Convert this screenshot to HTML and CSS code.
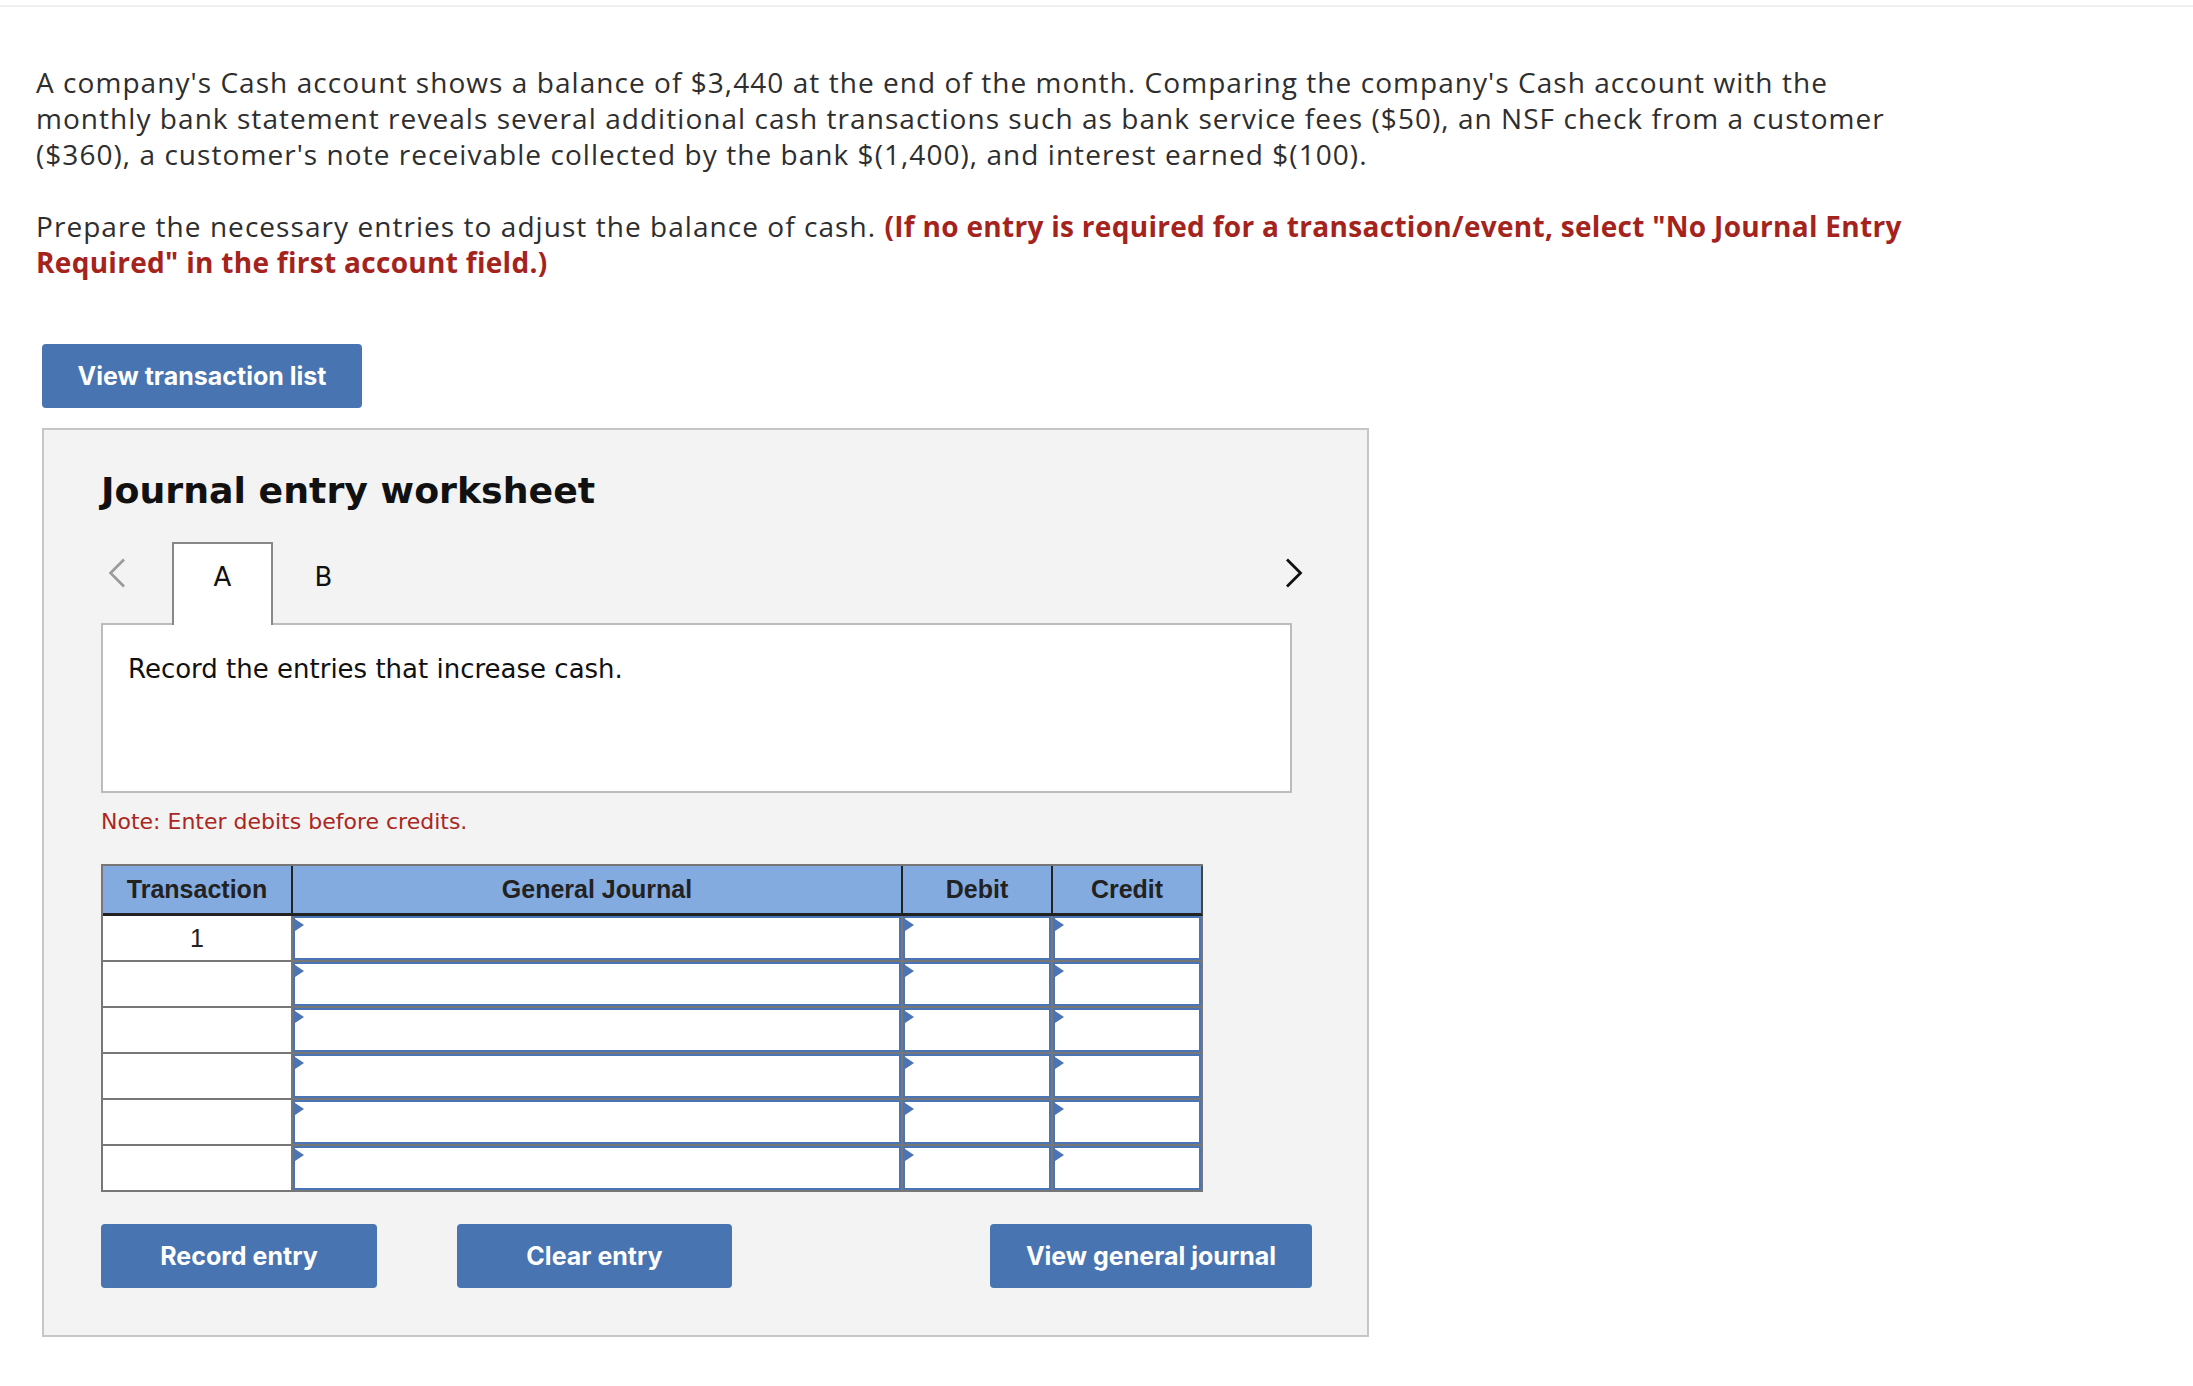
FILE: index.html
```html
<!DOCTYPE html>
<html lang="en">
<head>
  <meta charset="UTF-8">
  <meta name="viewport" content="width=device-width, initial-scale=1.0">
  <title>Journal entry worksheet</title>
  <link rel="stylesheet" href="styles.css">
</head>
<body>
  <div class="topbar"></div>

  <main class="page">
    <p class="question">A company's Cash account shows a balance of $3,440 at the end of the month. Comparing the company's Cash account with the<br>monthly bank statement reveals several additional cash transactions such as bank service fees ($50), an NSF check from a customer<br>($360), a customer's note receivable collected by the bank $(1,400), and interest earned $(100).</p>

    <p class="question">Prepare the necessary entries to adjust the balance of cash. <strong class="warn">(If no entry is required for a transaction/event, select "No Journal Entry<br>Required" in the first account field.)</strong></p>

    <button class="btn btn-list">View transaction list</button>

    <section class="worksheet">
      <h2 class="ws-title">Journal entry worksheet</h2>

      <div class="tabs">
        <span class="chev chev-left">
          <svg width="18" height="30" viewBox="0 0 18 30"><polyline points="16,1.5 2.5,15 16,28.5" fill="none" stroke="#9a9a9a" stroke-width="2.6"/></svg>
        </span>
        <span class="tab active">A</span>
        <span class="tab">B</span>
        <span class="chev chev-right">
          <svg width="18" height="30" viewBox="0 0 18 30"><polyline points="2,1.5 15.5,15 2,28.5" fill="none" stroke="#111" stroke-width="2.8"/></svg>
        </span>
      </div>

      <div class="instructions">Record the entries that increase cash.</div>

      <p class="note">Note: Enter debits before credits.</p>

      <table class="journal">
        <colgroup>
          <col class="c-trans">
          <col class="c-journal">
          <col class="c-debit">
          <col class="c-credit">
        </colgroup>
        <thead>
          <tr>
            <th>Transaction</th>
            <th>General Journal</th>
            <th>Debit</th>
            <th>Credit</th>
          </tr>
        </thead>
        <tbody>
          <tr>
            <td><div class="num">1</div></td>
            <td><div class="field"></div></td>
            <td><div class="field"></div></td>
            <td><div class="field"></div></td>
          </tr>
          <tr>
            <td><div class="num"></div></td>
            <td><div class="field"></div></td>
            <td><div class="field"></div></td>
            <td><div class="field"></div></td>
          </tr>
          <tr>
            <td><div class="num"></div></td>
            <td><div class="field"></div></td>
            <td><div class="field"></div></td>
            <td><div class="field"></div></td>
          </tr>
          <tr>
            <td><div class="num"></div></td>
            <td><div class="field"></div></td>
            <td><div class="field"></div></td>
            <td><div class="field"></div></td>
          </tr>
          <tr>
            <td><div class="num"></div></td>
            <td><div class="field"></div></td>
            <td><div class="field"></div></td>
            <td><div class="field"></div></td>
          </tr>
          <tr>
            <td><div class="num"></div></td>
            <td><div class="field"></div></td>
            <td><div class="field"></div></td>
            <td><div class="field"></div></td>
          </tr>
        </tbody>
      </table>

      <div class="actions">
        <button class="btn btn-record">Record entry</button>
        <button class="btn btn-clear">Clear entry</button>
        <button class="btn btn-view">View general journal</button>
      </div>
    </section>
  </main>
</body>
</html>
```

FILE: styles.css
```css
* { margin: 0; padding: 0; box-sizing: border-box; }
body { background: #fff; color: #2e2e2e; font-family: "Open Sans", Lato, "Liberation Sans", sans-serif; }

.topbar { height: 7px; border-bottom: 2px solid #efefef; }

.page { padding: 57px 36px 40px; }

.question { font-size: 28px; line-height: 36px; letter-spacing: 1.05px; margin-bottom: 36px; white-space: nowrap; }
.question:nth-of-type(2) { margin-bottom: 64px; }
.warn { color: #a5231d; font-weight: 700; letter-spacing: 0.3px; }

.btn {
  background: #4874b2; color: #fff; border: none; border-radius: 4px;
  height: 64px; font-family: Inter, "Liberation Sans", sans-serif;
  font-size: 25px; font-weight: 700; cursor: pointer;
}
.btn-list { display: block; width: 320px; margin-left: 6px; }

.worksheet {
  width: 1327px; margin: 20px 0 0 6px;
  background: #f3f3f3; border: 2px solid #c6c6c6;
  padding: 40px 55px 47px 57px;
  font-family: "DejaVu Sans", Verdana, sans-serif; color: #111;
}
.ws-title { font-size: 36.3px; line-height: 42px; font-weight: 700; }

.tabs {
  display: flex; width: 1191px; height: 83px;
  margin: 30px 0 -2px; position: relative; z-index: 1;
}
.chev { width: 18px; height: 30px; margin-top: 16px; }
.chev svg { display: block; }
.chev-left { margin-left: 7px; margin-right: 46px; }
.chev-right { margin-left: auto; margin-right: -11px; }
.tab { width: 101px; font-size: 26px; line-height: 30px; text-align: center; padding-top: 20px; }
.tab.active { background: #fff; border: 2px solid #888; border-bottom: none; padding-top: 18px; }

.instructions {
  width: 1191px; height: 170px; background: #fff; border: 2px solid #bcbcbc;
  padding: 29px 25px; font-size: 26px; line-height: 30px;
}

.note { margin-top: 16px; font-size: 22px; line-height: 26px; color: #ab2620; }

.journal {
  margin-top: 29px; width: 1102px; table-layout: fixed;
  border-collapse: separate; border-spacing: 0;
  border-top: 2px solid #777; border-left: 2px solid #777;
  font-family: "Liberation Sans", Arial, sans-serif; font-size: 25px; color: #222;
}
.c-trans { width: 190px; }
.c-journal { width: 610px; }
.c-debit { width: 150px; }
.c-credit { width: 150px; }
.journal th {
  height: 50px; padding: 0; background: #84abdf; font-weight: 700;
  border-right: 2px solid #222; border-bottom: 3px solid #222;
}
.journal th:last-child { border-right-color: #444; }
.journal td { padding: 0; background: #fff; border-right: 2px solid #777; border-bottom: 2px solid #777; }
.num { height: 44px; line-height: 44px; text-align: center; }
.field { height: 44px; border: 2px solid #4a74b4; position: relative; }
.field::before {
  content: ""; position: absolute; left: 0; top: 1px;
  border-left: 9px solid #4a74b4;
  border-top: 6.5px solid transparent; border-bottom: 6.5px solid transparent;
}

.actions { display: flex; margin-top: 32px; }
.btn-record { width: 276px; }
.btn-clear { width: 275px; margin-left: 80px; }
.btn-view { width: 322px; margin-left: auto; }
```
